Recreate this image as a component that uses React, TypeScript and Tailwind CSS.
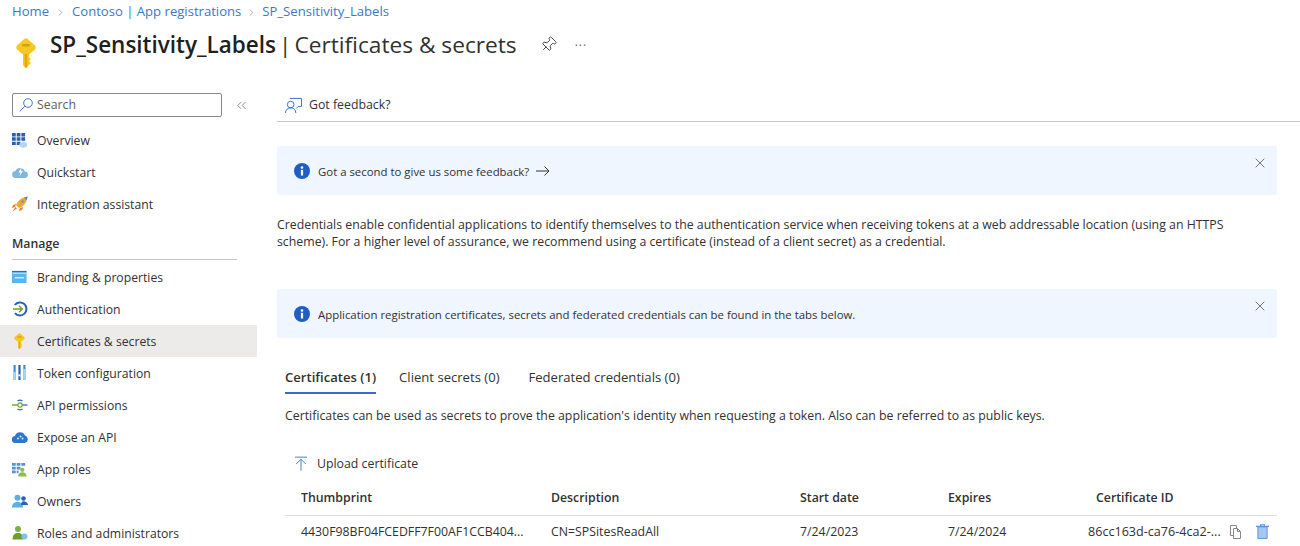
import type { ReactNode } from 'react';
import { ChevronRight, ChevronsLeft, Pin, X } from 'lucide-react';

function KeyIcon({ className }: { className: string }) {
  return (
    <svg viewBox="0 0 20 30" className={className}>
      <path d="M8.500 .8 Q10 -.3 11.500 .8 L19 7.500 Q20.500 9.500 19 11.500 L13 16.500 V19 L15 21 L13 23 L15 25 L13 27 L10 30 L7 27 V16.500 L1 11.500 Q-.5 9.500 1 7.500 Z" fill="#f7c821" />
      <path d="M10 16 V29.500" stroke="#e5a90f" strokeWidth="2.500" />
      <rect x="6" y="6" width="8" height="2.600" rx="1.300" fill="#c0921a" opacity="0.7" />
    </svg>
  );
}

function GridIcon() {
  return (
    <svg viewBox="0 0 16 16" className="h-[15px] w-[15px]">
      <path d="M0 0h4v3.600H0zM5 0h4v3.600H5zM10 0h4v3.600h-4zM0 4.600h4v3.600H0zM5 4.600h4v3.600H5zM10 4.600h4v3.600h-4zM0 9.200h4v3.600H0zM5 9.200h4v3.600H5z" fill="#2b5fb0" />
      <path d="M8 11l4-2 4 2v3.500l-4 1.500-4-1.500z" fill="#b5d6ee" />
    </svg>
  );
}

function QuickIcon() {
  return (
    <svg viewBox="0 0 16 16" className="h-4 w-4">
      <path d="M4 14a3.500 3.500 0 0 1-.6-7 5 5 0 0 1 9.400.6A3.200 3.200 0 0 1 12.500 14z" fill="#7db8df" />
      <path d="M9.500 3L6.500 8.500h2L7.500 12l3.500-5H9z" fill="#fff" />
    </svg>
  );
}

function RocketIcon() {
  return (
    <svg viewBox="0 0 16 16" className="h-[16px] w-[16px]">
      <path d="M4 9C6 4 10 1.500 15.500.5 15 6 12 10 7 12z" fill="#f2a531" />
      <path d="M12 1.500l3.500-1-.8 3.800z" fill="#4a8ad0" />
      <circle cx="10.500" cy="5.500" r="1.300" fill="#5a9bdc" />
      <path d="M4 8L1 9l-1 3 3-1zM8 12l-1 3 3-1 1-3zM3.500 11L.5 15.500 5 12.500z" fill="#e57e25" />
    </svg>
  );
}

function BrandIcon() {
  return (
    <svg viewBox="0 0 16 16" className="h-[15px] w-[15px]">
      <rect y="1" width="15.500" height="13" fill="#5ab4ee" />
      <rect y="1" width="15.500" height="1.200" fill="#2b6fb8" />
      <rect x="1" y="3" width="13.500" height="1" fill="#dcecf8" />
      <path d="M3 7.500h10v1.500H3z" fill="#d9eefb" />
    </svg>
  );
}

function AuthIcon() {
  return (
    <svg viewBox="0 0 16 16" className="h-[16px] w-[16px]" fill="none">
      <path d="M2.800 4A6.500 6.500 0 1 1 3 12.200" stroke="#2a62b5" strokeWidth="2" />
      <path d="M1 8h9M7 4.800L10.300 8 7 11.200" stroke="#6aa52f" strokeWidth="1.500" />
    </svg>
  );
}

function TokenIcon() {
  return (
    <svg viewBox="0 0 13 16" className="ml-[1px] h-[16px] w-[13px]">
      <rect x="0.500" y="0" width="2.200" height="15" fill="#3f8fd8" />
      <rect x="5.400" y="0" width="2.200" height="15" fill="#2a62b5" />
      <rect x="10.300" y="0" width="2.200" height="15" fill="#3f8fd8" />
      <rect x="0.500" y="7" width="2.200" height="8" fill="#a5d6f5" />
      <rect x="5.400" y="9.500" width="2.200" height="1.800" fill="#fff" />
      <rect x="10.300" y="4" width="2.200" height="11" fill="#a5d6f5" />
    </svg>
  );
}

function ApiIcon() {
  return (
    <svg viewBox="0 0 16 16" className="h-[16px] w-[16px]" fill="none">
      <path d="M0 8h6" stroke="#6aa52f" strokeWidth="1.400" />
      <circle cx="8" cy="8" r="2.200" stroke="#6aa52f" strokeWidth="1.200" />
      <path d="M5.500 3.900a5 5 0 0 1 5 0M5.500 12.100a5 5 0 0 0 5 0" stroke="#2a62b5" strokeWidth="1.200" />
      <path d="M10.500 8H15.500" stroke="#2a62b5" strokeWidth="1.200" />
    </svg>
  );
}

function ExposeIcon() {
  return (
    <svg viewBox="0 0 16 16" className="h-[16px] w-[16px]">
      <path d="M3.600 14a3.500 3.500 0 0 1-.6-7 5.300 5.300 0 0 1 10-.4A3.800 3.800 0 0 1 12.500 14z" fill="#2e76cf" />
      <circle cx="6" cy="9.500" r="1" fill="#d5e8f8" />
      <circle cx="8.500" cy="7.500" r="1" fill="#d5e8f8" />
      <circle cx="10.500" cy="9.500" r="1" fill="#d5e8f8" />
    </svg>
  );
}

function RolesIcon() {
  return (
    <svg viewBox="0 0 16 16" className="h-[15px] w-[15px]">
      <path d="M0 1h4v3H0zM5 1h4v3H5zM10 1h4v3h-4zM0 5h4v3H0zM5 5h4v3H5zM0 9h4v3H0zM5 9h2v3H5z" fill="#5c8fd6" />
      <circle cx="11" cy="8.300" r="2.300" fill="#8fbc4d" />
      <path d="M6.500 15.500c0-3 2-4.500 4.500-4.500s4.500 1.500 4.500 4.500z" fill="#8fbc4d" />
    </svg>
  );
}

function OwnersIcon() {
  return (
    <svg viewBox="0 0 16 16" className="h-[16px] w-[16px]">
      <circle cx="5.500" cy="4.800" r="3" fill="#5ab0e0" />
      <path d="M0 14.500c0-4 2.500-5.500 5.500-5.500s5.500 1.500 5.500 5.500z" fill="#5ab0e0" />
      <circle cx="11.500" cy="5.500" r="2.300" fill="#2a62b5" />
      <path d="M9 12c0-2.500 1-3.800 2.500-3.800S16 9.500 16 12z" fill="#2a62b5" />
    </svg>
  );
}

function AdminIcon() {
  return (
    <svg viewBox="0 0 16 16" className="h-[16px] w-[16px]">
      <circle cx="6" cy="4" r="3" fill="#7db33c" />
      <path d="M.5 14.500c0-5 2.500-6.500 5.500-6.500s5.500 1.500 5.500 6.500z" fill="#6a9f2c" />
      <circle cx="12.500" cy="11.500" r="3" fill="#7cc4e8" />
    </svg>
  );
}

function NavItem({ icon, label, active }: { icon: ReactNode; label: string; active?: boolean }) {
  return (
    <div className={`flex h-8 items-center ${active ? 'bg-[#edebe9]' : ''}`}>
      <span className="flex w-[37px] shrink-0 justify-start pl-3">{icon}</span>
      <span className="pt-[2px] text-[12.200px] text-[#323130]">{label}</span>
    </div>
  );
}

function Banner({ text, children, className }: { text: string; children?: ReactNode; className: string }) {
  return (
    <div className={`flex h-[49px] items-center rounded-[2px] bg-[#f0f6ff] pl-[17px] pr-[9px] ${className}`}>
      <svg viewBox="0 0 16 16" className="h-4 w-4 shrink-0">
        <circle cx="8" cy="8" r="8" fill="#1f5fc4" />
        <circle cx="8" cy="4.500" r="1.300" fill="#fff" />
        <rect x="6.900" y="6.800" width="2.200" height="5.700" fill="#fff" />
      </svg>
      <span className="ml-2 pt-[3px] text-[11.400px] text-[#323130]">{text}</span>
      {children}
      <X className="mb-[16px] ml-auto h-4 w-4 text-[#605e5c]" strokeWidth={1.300} />
    </div>
  );
}

const manageItems = [
  { icon: <BrandIcon />, label: 'Branding & properties' },
  { icon: <AuthIcon />, label: 'Authentication' },
  { icon: <KeyIcon className="ml-[2px] h-[16px] w-[11px]" />, label: 'Certificates & secrets', active: true },
  { icon: <TokenIcon />, label: 'Token configuration' },
  { icon: <ApiIcon />, label: 'API permissions' },
  { icon: <ExposeIcon />, label: 'Expose an API' },
  { icon: <RolesIcon />, label: 'App roles' },
  { icon: <OwnersIcon />, label: 'Owners' },
  { icon: <AdminIcon />, label: 'Roles and administrators' },
];

export default function App() {
  return (
    <div className="h-[546px] w-[1300px] overflow-hidden bg-white font-['Open_Sans',sans-serif] text-[12.320px] text-[#323130]">
      <div className="flex h-[22px] items-center pl-3 pt-[2px] text-[13.100px] text-[#3b78c9]">
        <span>Home</span>
        <ChevronRight className="mx-[6px] h-[11px] w-[11px] text-[#8a8886]" strokeWidth={1.500} />
        <span>Contoso | App registrations</span>
        <ChevronRight className="mx-[5px] h-[11px] w-[11px] text-[#8a8886]" strokeWidth={1.500} />
        <span>SP_Sensitivity_Labels</span>
      </div>

      <div className="flex h-[49px] items-center pb-[4px] pl-4">
        <KeyIcon className="mt-[16px] h-[30px] w-[20px]" />
        <h1 className="ml-[14px] text-[22.500px] font-semibold text-[#201f1e]">SP_Sensitivity_Labels</h1>
        <span className="ml-[3px] text-[22.500px] text-[#323130]">|</span>
        <span className="ml-[3px] pt-[2px] text-[22.700px] text-[#323130]">Certificates &amp; secrets</span>
        <Pin className="ml-[23px] h-[17px] w-[17px] rotate-45 text-[#323130]" strokeWidth={1.200} />
        <span className="mb-[6px] ml-[18px] text-[12px] tracking-[1px] text-[#605e5c]">...</span>
      </div>

      <div className="flex">
        <aside className="w-[257px] shrink-0 pt-[22px]">
          <div className="flex items-center pl-3">
            <div className="flex h-[24px] w-[210px] items-center rounded-[2px] border border-[#8a8886] pl-[6px] text-[#605e5c]">
              <svg viewBox="0 0 14 14" className="h-[14px] w-[14px]" fill="none" stroke="#3b78c9" strokeWidth="1">
                <circle cx="9" cy="5" r="4.300" />
                <path d="M6 8.200L.8 13.300" />
              </svg>
              <span className="ml-[4px]">Search</span>
            </div>
            <ChevronsLeft className="ml-[12px] h-[15px] w-[15px] text-[#605e5c]" strokeWidth={1.100} />
          </div>
          <div className="mt-[7px]">
            <NavItem icon={<GridIcon />} label="Overview" />
            <NavItem icon={<QuickIcon />} label="Quickstart" />
            <NavItem icon={<RocketIcon />} label="Integration assistant" />
          </div>
          <div className="ml-3 mr-5 mt-[15px] border-b border-[#c8c6c4] pb-[7px] font-semibold leading-[17px] text-[#323130]">Manage</div>
          <div className="mt-[1px]">
            {manageItems.map((item) => (
              <NavItem key={item.label} icon={item.icon} label={item.label} active={item.active} />
            ))}
          </div>
        </aside>

        <main className="ml-5 w-[1000px] shrink-0">
          <div className="mt-[15px] flex h-[36px] w-[1023px] items-center border-b border-[#c8c6c4] pl-[8px] pt-[3px]">
            <svg viewBox="0 0 18 18" className="h-[17px] w-[17px]" fill="none" stroke="#2f6fc4" strokeWidth="1">
              <circle cx="6" cy="8" r="3.500" />
              <path d="M.5 17c0-3.500 2.500-5.500 5.500-5.500s5.500 2 5.500 5.500M5 1.500h12.500V10H14l-2 2" />
            </svg>
            <span className="ml-[7px]">Got feedback?</span>
          </div>

          <Banner className="mt-6" text="Got a second to give us some feedback?">
            <svg viewBox="0 0 14 12" className="ml-[7px] h-[12px] w-[14px]" fill="none" stroke="#323130" strokeWidth="1">
              <path d="M0 6h13M8.500 1.500L13 6l-4.500 4.500" />
            </svg>
          </Banner>

          <p className="mt-[21px] leading-[17px] text-[#323130]">
            Credentials enable confidential applications to identify themselves to the authentication service when receiving tokens at a web addressable location (using an HTTPS scheme). For a higher level of assurance, we recommend using a certificate (instead of a client secret) as a credential.
          </p>

          <Banner className="mt-[39px]" text="Application registration certificates, secrets and federated credentials can be found in the tabs below." />

          <div className="mt-[26px] flex pl-2 text-[13.100px]">
            <div className="h-[30px] border-b-2 border-[#2f6fc4] pt-[4px] font-semibold text-[#323130]">Certificates (1)</div>
            <div className="ml-[23px] pt-[4px]">Client secrets (0)</div>
            <div className="ml-[29px] pt-[4px]">Federated credentials (0)</div>
          </div>
          <p className="mt-[13px] pl-2 leading-[18px]">
            Certificates can be used as secrets to prove the application's identity when requesting a token. Also can be referred to as public keys.
          </p>

          <div className="mt-[30px] flex items-center pl-[18px] leading-[18px]">
            <svg viewBox="0 0 14 18" className="h-[18px] w-[12px]" fill="none" stroke="#3b78c9" strokeWidth="1.100">
              <path d="M0 1h14M7 17V3.500M1.500 9L7 3.500 12.500 9" />
            </svg>
            <span className="ml-[10px]">Upload certificate</span>
          </div>

          <div className="ml-2 mt-[7px] grid h-[36px] w-[992px] grid-cols-[250px_249px_148px_148px_197px] items-center border-b border-[#e1dfdd] pl-4 pt-[2px] font-semibold">
            <span>Thumbprint</span>
            <span>Description</span>
            <span>Start date</span>
            <span>Expires</span>
            <span>Certificate ID</span>
          </div>
          <div className="ml-2 grid h-[32px] w-[992px] grid-cols-[250px_249px_148px_140px_205px] items-center pl-4">
            <span>4430F98BF04FCEDFF7F00AF1CCB404...</span>
            <span>CN=SPSitesReadAll</span>
            <span>7/24/2023</span>
            <span>7/24/2024</span>
            <div className="flex items-center">
              <span className="text-[12.600px]">86cc163d-ca76-4ca2-...</span>
              <svg viewBox="0 0 12 14" className="ml-[9px] h-[14px] w-[12px]" fill="none" stroke="#8a8886" strokeWidth="1">
                <path d="M.5.5h6v10h-6z" />
                <path d="M3.500 3.500h4l3 3v7h-7z" fill="#fff" />
                <path d="M7.500 3.500v3h3" />
              </svg>
              <svg viewBox="0 0 14 16" className="ml-[14px] h-[15px] w-[13px]">
                <path d="M2 3h10v12.500H2z" fill="#a6c8f0" stroke="#5a93d8" strokeWidth="1" />
                <path d="M0 2.500h14M5 2.500V.8h4v1.700" stroke="#5a93d8" strokeWidth="1.200" fill="none" />
              </svg>
            </div>
          </div>
        </main>
      </div>
    </div>
  );
}
